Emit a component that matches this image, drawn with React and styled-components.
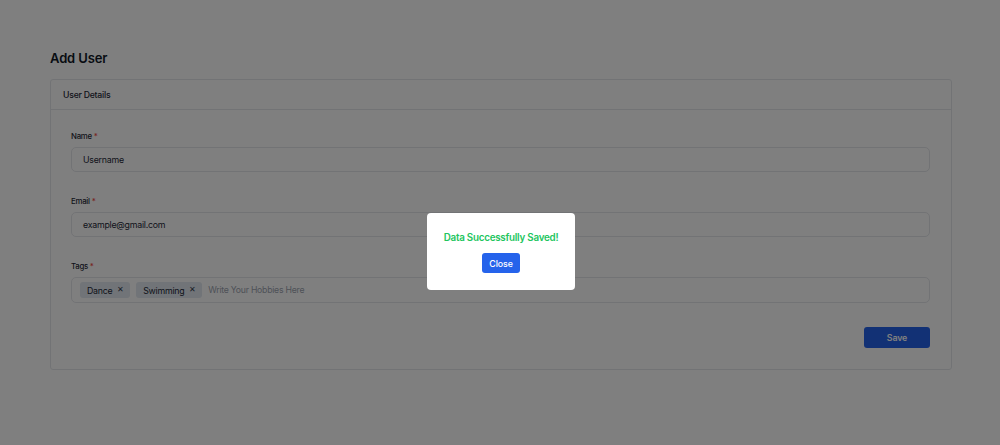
import React, { useState } from "react";
import styled, { createGlobalStyle } from "styled-components";

const GlobalStyle = createGlobalStyle`
  * { box-sizing: border-box; }
  body {
    margin: 0;
    background: #ffffff;
    font-family: Inter, "Noto Sans", sans-serif;
    letter-spacing: -0.015em;
    color: #111827;
  }
`;

const Page = styled.div`
  padding: 48px 48px 74px 50px;
`;

const Title = styled.h1`
  margin: 0 0 11px;
  font-size: 13px;
  line-height: 20px;
  font-weight: 600;
  letter-spacing: -0.01em;
  color: #111827;
`;

const Card = styled.div`
  border: 1px solid #e5e7eb;
  border-radius: 3px;
  background: #fff;
`;

const CardHeader = styled.div`
  height: 30px;
  display: flex;
  align-items: center;
  padding: 0 12px;
  border-bottom: 1px solid #e5e7eb;
  font-size: 8.7px;
  font-weight: 500;
  color: #1f2937;
`;

const CardBody = styled.div`
  padding: 20px 21px 21px 20px;
  display: flex;
  flex-direction: column;
`;

const Field = styled.div`
  display: flex;
  flex-direction: column;
  & + & {
    margin-top: 23px;
  }
`;

const Label = styled.label`
  font-size: 7.8px;
  line-height: 12px;
  font-weight: 500;
  color: #1f2937;
  margin-bottom: 5px;
  span {
    color: #ef4444;
  }
`;

const Input = styled.div`
  height: ${(p) => (p.tags ? "26px" : "25px")};
  border: 1px solid #e5e7eb;
  border-radius: 5px;
  display: flex;
  align-items: center;
  gap: 6px;
  padding: 0 ${(p) => (p.tags ? "8px" : "11px")};
  font-size: 8.8px;
  color: #1f2937;
`;

const Chip = styled.span`
  height: 16px;
  display: inline-flex;
  align-items: center;
  gap: 5px;
  padding: 0 6px 0 7px;
  border-radius: 3px;
  background: #e2e8f0;
  font-size: 8.8px;
  color: #1f2937;
`;

const Remove = styled.span`
  font-size: 7.5px;
  line-height: 1;
  color: #374151;
`;

const Placeholder = styled.span`
  color: #9ca3af;
  font-size: 8.7px;
`;

const Actions = styled.div`
  display: flex;
  justify-content: flex-end;
  margin-top: 24px;
`;

const Button = styled.button`
  border: none;
  border-radius: 3px;
  background: #2563eb;
  color: #fff;
  font-family: Inter, sans-serif;
  font-size: 8.8px;
  letter-spacing: -0.01em;
  font-weight: ${(p) => (p.small ? 500 : 600)};
  width: ${(p) => (p.small ? "38px" : "66px")};
  height: ${(p) => (p.small ? "20px" : "21px")};
  padding: 0;
  cursor: pointer;
`;

const Overlay = styled.div`
  position: fixed;
  inset: 0;
  background: rgba(0, 0, 0, 0.5);
  display: flex;
  justify-content: center;
  align-items: flex-start;
  padding-top: 213px;
  padding-left: 2px;
`;

const Modal = styled.div`
  width: 148px;
  height: 77px;
  background: #fff;
  border-radius: 4px;
  padding: 18px 0 17px;
  display: flex;
  flex-direction: column;
  align-items: center;
  gap: 9px;
`;

const Message = styled.div`
  font-size: 9.8px;
  line-height: 13px;
  font-weight: 600;
  color: #22c55e;
`;

const tags = ["Dance", "Swimming"];

export default function App() {
  const [open, setOpen] = useState(true);

  return (
    <>
      <GlobalStyle />
      <Page>
        <Title>Add User</Title>
        <Card>
          <CardHeader>User Details</CardHeader>
          <CardBody>
            <Field>
              <Label>
                Name <span>*</span>
              </Label>
              <Input>Username</Input>
            </Field>
            <Field>
              <Label>
                Email <span>*</span>
              </Label>
              <Input>example@gmail.com</Input>
            </Field>
            <Field>
              <Label>
                Tags <span>*</span>
              </Label>
              <Input tags>
                {tags.map((t) => (
                  <Chip key={t}>
                    {t}
                    <Remove>✕</Remove>
                  </Chip>
                ))}
                <Placeholder>Write Your Hobbies Here</Placeholder>
              </Input>
            </Field>
            <Actions>
              <Button>Save</Button>
            </Actions>
          </CardBody>
        </Card>
      </Page>
      {open && (
        <Overlay>
          <Modal>
            <Message>Data Successfully Saved!</Message>
            <Button small onClick={() => setOpen(false)}>
              Close
            </Button>
          </Modal>
        </Overlay>
      )}
    </>
  );
}
